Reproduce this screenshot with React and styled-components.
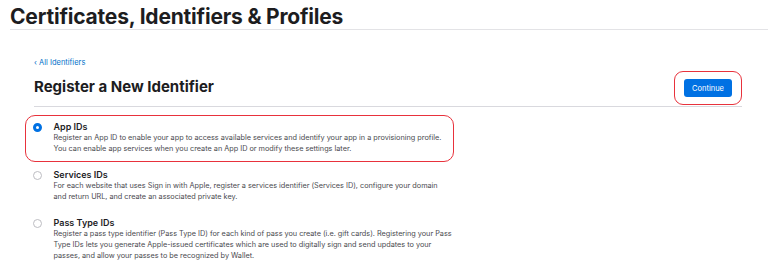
import React from 'react';
import styled, { createGlobalStyle } from 'styled-components';

const GlobalStyle = createGlobalStyle`
  body {
    margin: 0;
    background: #fff;
    font-family: Inter, "Liberation Sans", Arial, sans-serif;
    color: #1d1d1f;
  }
`;

const Page = styled.div`
  width: 768px;
  height: 270px;
  overflow: hidden;
`;

const Header = styled.header`
  margin-left: 10px;
  padding-top: 4px;
  border-bottom: 1px solid #e3e3e6;
`;

const PageTitle = styled.h1`
  margin: 0;
  font-size: 21px;
  line-height: 25px;
  font-weight: 700;
  letter-spacing: -0.2px;
`;

const Content = styled.main`
  padding: 0 26px 0 34px;
`;

const BackLink = styled.a`
  display: block;
  margin-top: 28px;
  font-size: 7.5px;
  line-height: 10px;
  color: #0070c9;
  text-decoration: none;
`;

const TitleBar = styled.div`
  display: flex;
  align-items: center;
  justify-content: space-between;
  height: 36px;
  margin-top: 2px;
  border-bottom: 1px solid #d9d9de;
`;

const SectionTitle = styled.h2`
  margin: 0;
  font-size: 15px;
  font-weight: 700;
  line-height: 20px;
  padding-bottom: 3px;
`;

const Annotated = styled.div`
  padding: 7px 9px;
  border: 1.5px solid #e8323c;
  border-radius: 9px;
`;

const Button = styled.button`
  display: block;
  width: 48px;
  height: 18px;
  border: 0;
  border-radius: 3px;
  background: #0071e3;
  color: #fff;
  font-family: inherit;
  font-size: 7.5px;
  padding: 0;
`;

const List = styled.div`
  display: flex;
  flex-direction: column;
  gap: 1px;
  margin: 8px 0 0 -9px;
`;

const Option = styled.label`
  display: flex;
  align-items: flex-start;
  gap: 12px;
  width: 420px;
  padding: 5px 0 7px 6.5px;
  border: 1.5px solid ${p => (p.$highlighted ? '#e8323c' : 'transparent')};
  border-radius: 10px;
`;

const Radio = styled.span`
  flex: none;
  box-sizing: border-box;
  width: 9px;
  height: 9px;
  margin-top: 1.5px;
  border-radius: 50%;
  border: ${p => (p.$checked ? '3px solid #0071e3' : '1px solid #bdbdc2')};
  background: #fff;
`;

const Body = styled.div`
  display: flex;
  flex-direction: column;
`;

const OptionTitle = styled.span`
  font-size: 9px;
  font-weight: 600;
  line-height: 11px;
`;

const OptionText = styled.p`
  margin: 0;
  font-size: 7.3px;
  line-height: 11px;
  letter-spacing: -0.01px;
  color: #4a4a4f;
`;

const options = [
  {
    title: 'App IDs',
    text: 'Register an App ID to enable your app to access available services and identify your app in a provisioning profile. You can enable app services when you create an App ID or modify these settings later.',
    checked: true,
  },
  {
    title: 'Services IDs',
    text: 'For each website that uses Sign in with Apple, register a services identifier (Services ID), configure your domain and return URL, and create an associated private key.',
  },
  {
    title: 'Pass Type IDs',
    text: 'Register a pass type identifier (Pass Type ID) for each kind of pass you create (i.e. gift cards). Registering your Pass Type IDs lets you generate Apple-issued certificates which are used to digitally sign and send updates to your passes, and allow your passes to be recognized by Wallet.',
  },
];

export default function App() {
  return (
    <Page>
      <GlobalStyle />
      <Header>
        <PageTitle>Certificates, Identifiers &amp; Profiles</PageTitle>
      </Header>
      <Content>
        <BackLink href="#">‹ All Identifiers</BackLink>
        <TitleBar>
          <SectionTitle>Register a New Identifier</SectionTitle>
          <Annotated>
            <Button>Continue</Button>
          </Annotated>
        </TitleBar>
        <List>
          {options.map(o => (
            <Option key={o.title} $highlighted={o.checked}>
              <Radio $checked={o.checked} />
              <Body>
                <OptionTitle>{o.title}</OptionTitle>
                <OptionText>{o.text}</OptionText>
              </Body>
            </Option>
          ))}
        </List>
      </Content>
    </Page>
  );
}
